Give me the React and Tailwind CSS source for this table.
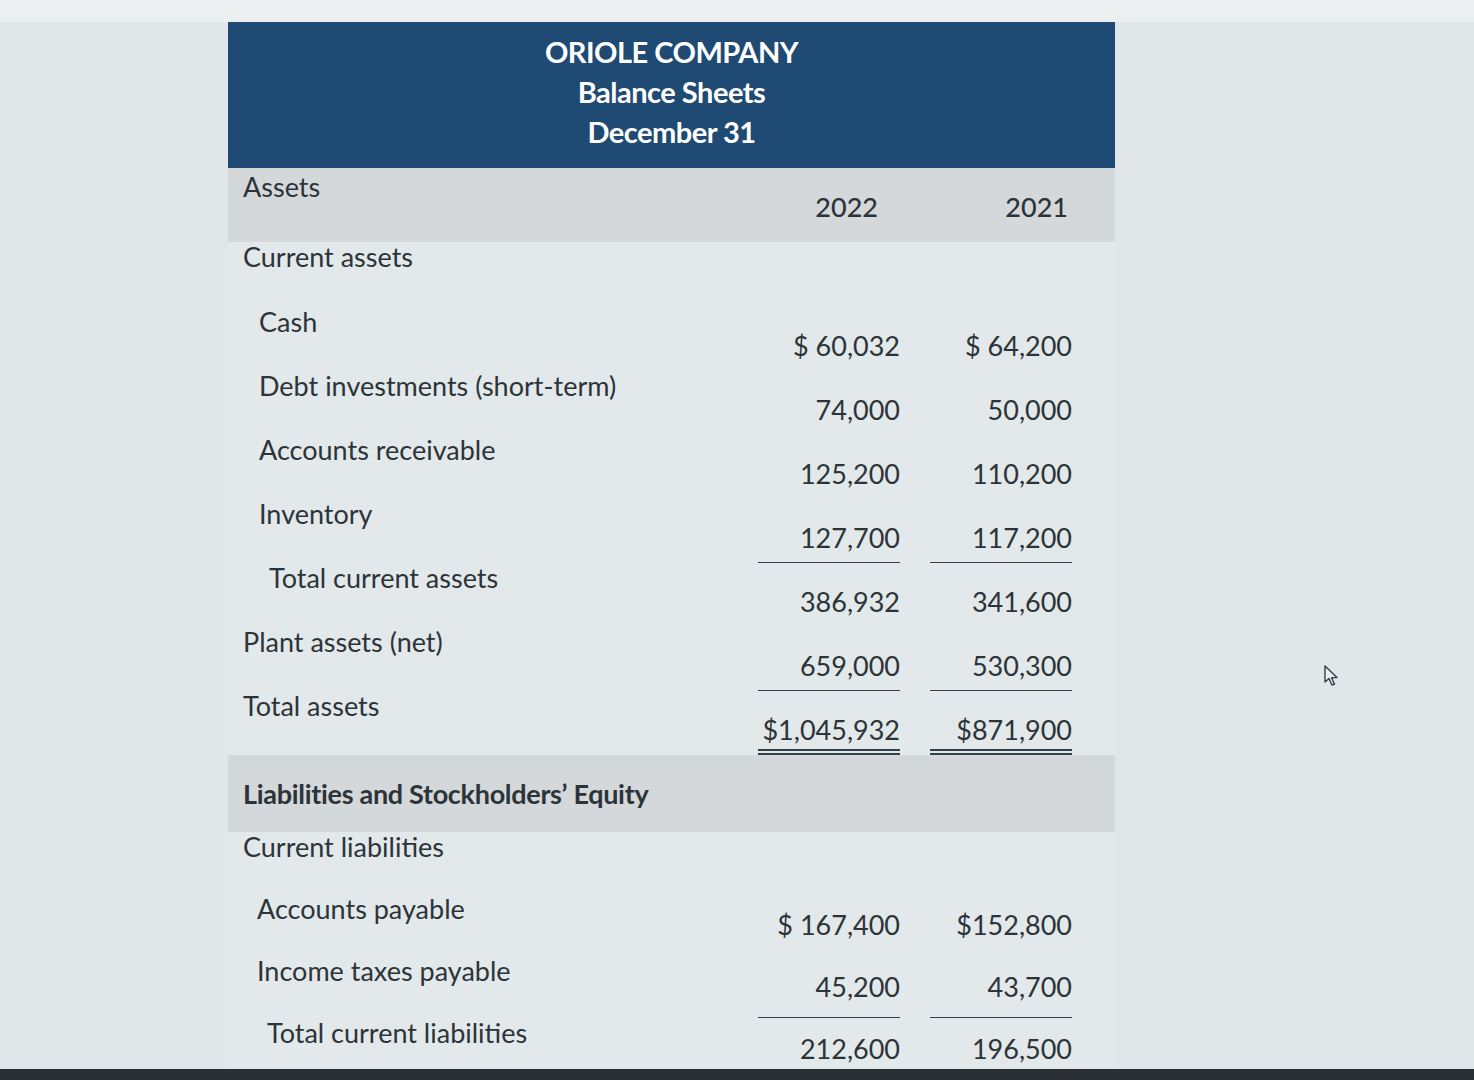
const assetRows = [
  { label: 'Cash', indent: 'pl-[31px]', a: '$ 60,032', b: '$ 64,200' },
  { label: 'Debt investments (short-term)', indent: 'pl-[31px]', a: '74,000', b: '50,000' },
  { label: 'Accounts receivable', indent: 'pl-[31px]', a: '125,200', b: '110,200' },
  { label: 'Inventory', indent: 'pl-[31px]', a: '127,700', b: '117,200', line: 'single' },
  { label: 'Total current assets', indent: 'pl-[41px]', a: '386,932', b: '341,600' },
  { label: 'Plant assets (net)', indent: 'pl-[15px]', a: '659,000', b: '530,300', line: 'single' },
  { label: 'Total assets', indent: 'pl-[15px]', a: '$1,045,932', b: '$871,900', line: 'double' },
];

const liabilityRows = [
  { label: 'Accounts payable', indent: 'pl-[29px]', a: '$ 167,400', b: '$152,800' },
  { label: 'Income taxes payable', indent: 'pl-[29px]', a: '45,200', b: '43,700', line: 'single' },
  { label: 'Total current liabilities', indent: 'pl-[39px]', a: '212,600', b: '196,500' },
];

function Amount({ value, line }) {
  // underline sits just under the figure, like the printed statement
  const rule =
    line === 'single'
      ? 'border-b-[1.5px] border-[#33414a]'
      : line === 'double'
      ? 'border-b-[6px] border-double border-[#33414a]'
      : 'border-b-[1.5px] border-transparent';
  return (
    <div className={`w-[142px] text-right pb-[3px] leading-[30px] ${rule}`}>{value}</div>
  );
}

function Row({ row, height, valueTop }) {
  return (
    <div className={`flex ${height}`}>
      <div className={`flex-1 leading-[30px] ${row.indent}`}>{row.label}</div>
      <div className={`flex gap-[30px] pr-[43px] ${valueTop}`}>
        <Amount value={row.a} line={row.line} />
        <Amount value={row.b} line={row.line} />
      </div>
    </div>
  );
}

function Cursor() {
  return (
    <svg
      className="absolute left-[1323px] top-[664px]"
      width="18"
      height="24"
      viewBox="0 0 18 24"
    >
      <path
        d="M2 2 L2 18 L6 14.5 L9 21 L11.5 20 L8.6 13.6 L14 13.6 Z"
        fill="#e9eef0"
        stroke="#3a4146"
        strokeWidth="1.4"
        strokeLinejoin="round"
      />
    </svg>
  );
}

export default function App() {
  return (
    <div
      className="relative h-[1080px] w-full overflow-hidden bg-[#e1e6e8] text-[#2c3439] flex flex-col"
      style={{ fontFamily: 'Lato, "Open Sans", sans-serif' }}
    >
      <div className="h-[22px] bg-[#eceff0]" />
      <div className="flex-1 pl-[228px] overflow-hidden">
        <div className="w-[887px] text-[27px] bg-[#e3e8ea]">
          {/* title block */}
          <div className="h-[146px] bg-[#1f4a73] pt-[10px] text-center text-white font-bold text-[29px] leading-[40px] tracking-[-0.5px]">
            <div>ORIOLE COMPANY</div>
            <div>Balance Sheets</div>
            <div>December 31</div>
          </div>

          {/* column header band */}
          <div className="flex h-[74px] bg-[#d4d8da]">
            <div className="flex-1 pl-[15px] pt-[2px] leading-[34px]">Assets</div>
            <div className="flex gap-[30px] pr-[43px] pt-[24px] font-medium">
              <div className="w-[142px] text-right pr-[22px] leading-[30px]">2022</div>
              <div className="w-[142px] text-right pr-[4px] leading-[30px]">2021</div>
            </div>
          </div>

          <div className="h-[65px] pl-[15px] leading-[30px]">Current assets</div>
          {assetRows.map((row) => (
            <Row key={row.label} row={row} height="h-[64px]" valueTop="pt-[24px]" />
          ))}

          <div className="h-[77px] bg-[#d4d8da] pl-[15px] pt-[24px] leading-[30px] font-bold tracking-[-0.3px]">
            Liabilities and Stockholders’ Equity
          </div>

          <div className="h-[62px] pl-[15px] leading-[30px]">Current liabilities</div>
          {liabilityRows.map((row) => (
            <Row key={row.label} row={row} height="h-[62px]" valueTop="pt-[16px]" />
          ))}
        </div>
      </div>
      <div className="h-[11px] bg-[#2a2f33]" />
      <Cursor />
    </div>
  );
}
